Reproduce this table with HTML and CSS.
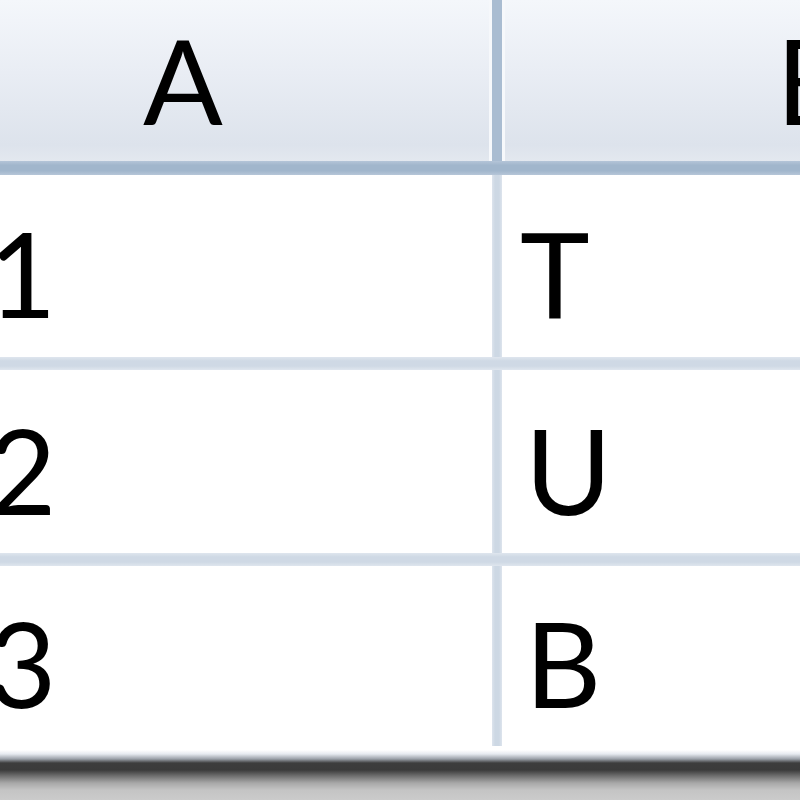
FILE: index.html
```html
<!DOCTYPE html>
<html lang="en">
<head>
<meta charset="utf-8">
<title>Sheet</title>
<link rel="stylesheet" href="styles.css">
</head>
<body>
<div class="sheet">
  <div class="hcell col-a"><span class="htext a-text">A</span></div>
  <div class="hsep"></div>
  <div class="hcell col-b"><span class="htext b-text">B</span></div>
  <div class="hborder"></div>

  <div class="cell col-a r1"><span class="num">1</span></div>
  <div class="cell col-b r1"><span class="txt">T</span></div>
  <div class="gline g1"></div>

  <div class="cell col-a r2"><span class="num">2</span></div>
  <div class="cell col-b r2"><span class="txt">U</span></div>
  <div class="gline g2"></div>

  <div class="cell col-a r3"><span class="num">3</span></div>
  <div class="cell col-b r3"><span class="txt">B</span></div>

  <div class="vsep"></div>
  <div class="bottom"></div>
</div>
</body>
</html>
```

FILE: styles.css
```css
html, body {
  margin: 0;
  padding: 0;
  width: 800px;
  height: 800px;
  overflow: hidden;
  background: #ffffff;
}

.sheet {
  display: grid;
  grid-template-columns: 492px 10px 298px;
  grid-template-rows: 161px 14px 182px 13px 183px 13px 184px 50px;
  width: 800px;
  height: 800px;
  font-family: Lato, "Open Sans", "Liberation Sans", sans-serif;
  color: #000;
  overflow: hidden;
}

.col-a { grid-column: 1; }
.col-b { grid-column: 3; }

.hcell {
  grid-row: 1;
  background: linear-gradient(to bottom, #f4f7fb 0%, #e9edf4 45%, #dde3ec 90%, #e3e8ef 100%);
  font-size: 118px;
  line-height: 118px;
  padding-top: 21px;
  box-sizing: border-box;
  white-space: nowrap;
  overflow: hidden;
}

.a-text { display: block; padding-left: 143px; }
.b-text { display: block; padding-left: 274px; }

.hsep {
  grid-column: 2;
  grid-row: 1;
  background: #a9bcd1;
  box-shadow: -3px 0 0 #f6f8fb, 3px 0 0 #f6f8fb;
  position: relative;
  z-index: 1;
}

.hborder {
  grid-column: 1 / 4;
  grid-row: 2;
  background: linear-gradient(to bottom, #b4c5d8 0%, #a1b6cc 30%, #a1b6cc 70%, #b6c6d8 100%);
  position: relative;
  z-index: 2;
}

.cell {
  font-size: 118px;
  line-height: 118px;
  padding-top: 39px;
  box-sizing: border-box;
  background: #fff;
  white-space: nowrap;
  overflow: hidden;
}

.r1 { grid-row: 3; }
.r2 { grid-row: 5; padding-top: 41px; }
.r3 { grid-row: 7; padding-top: 38px; }

.num { display: block; margin-left: -12px; }
.txt { display: block; padding-left: 18px; }
.r2 .txt, .r3 .txt { padding-left: 23px; }

.gline {
  grid-column: 1 / 4;
  background: linear-gradient(to bottom, #dfe6ee 0%, #cfd9e5 30%, #cfd9e5 70%, #dfe6ee 100%);
  position: relative;
  z-index: 2;
}
.g1 { grid-row: 4; }
.g2 { grid-row: 6; }

.vsep {
  grid-column: 2;
  grid-row: 3 / 8;
  background: linear-gradient(to right, #dde4ed 0%, #cdd8e4 30%, #cdd8e4 70%, #dde4ed 100%);
  margin-bottom: 4px;
}

.bottom {
  grid-column: 1 / 4;
  grid-row: 8;
  background: linear-gradient(to bottom,
    #ffffff 0px,
    #e6eaf0 4px,
    #9aa0a8 9px,
    #3d3d3d 13px,
    #3b3b3b 20px,
    #6f6f6f 26px,
    #a8a8a8 33px,
    #c4c4c4 40px,
    #cbcbcb 50px);
}
```
